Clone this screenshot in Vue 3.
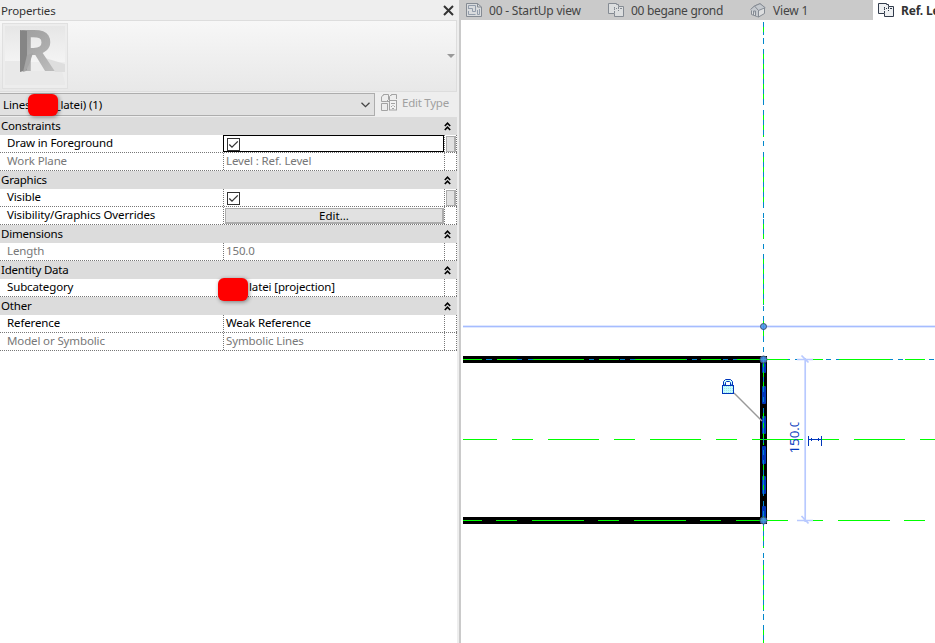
<template>
  <div class="window">
    <aside class="panel">
      <header class="title">
        <span class="fit">Properties</span>
        <svg class="close" width="11" height="11" viewBox="0 0 11 11">
          <path d="M1 1L10 10M10 1L1 10" fill="none" stroke="#333" stroke-width="2" />
        </svg>
      </header>

      <div class="preview">
        <svg width="66" height="66" viewBox="0 0 66 66">
          <defs>
            <linearGradient id="face" x1="0" y1="0" x2="0.4" y2="1">
              <stop offset="0" stop-color="#979797" />
              <stop offset="0.5" stop-color="#a6a6a6" />
              <stop offset="1" stop-color="#bcbcbc" />
            </linearGradient>
            <linearGradient id="wall" x1="0" y1="0" x2="0" y2="1">
              <stop offset="0" stop-color="#e6e6e6" />
              <stop offset="1" stop-color="#f4f4f4" />
            </linearGradient>
          </defs>
          <rect x="0.5" y="0.5" width="65" height="65" fill="#ededed" stroke="#e0e0e0" />
          <rect x="3" y="3" width="60" height="36" fill="url(#wall)" />
          <path d="M3 38H20V48L60 48L63 60V62H3Z" fill="#e9e9e9" />
          <path d="M43 35L63 41V49H53Z" fill="#dedede" />
          <text class="logo" x="15" y="48" fill="url(#face)">R</text>
          <path d="M18 7L25 8V47L18 49Z" fill="#858585" />
          <path d="M25 32L31 30L28 39L24 48L21 49Z" fill="#a5a5a5" />
        </svg>
        <i class="drop"></i>
      </div>

      <div class="selector">
        <div class="combo">
          <span class="fit">Lines</span>
          <b class="redact"></b>
          <span class="fit tail">_latei) (1)</span>
          <svg width="9" height="6" viewBox="0 0 9 6">
            <path d="M0.5 0.7L4.5 4.7L8.5 0.7" fill="none" stroke="#444" stroke-width="1.3" />
          </svg>
        </div>
        <div class="edit-type">
          <svg width="17" height="17" viewBox="0 0 17 17" fill="none" stroke="#a3a3a3">
            <path d="M0.5 7.5V3L2.5 0.5H7.5V5.5L5.5 7.5ZM8.5 6V2.5L10.5 0.5H15.5V5M0.5 9.5H6.5V16.5H0.5ZM5.5 7.5H8M2.5 0.5V1.5M10.5 0.5V1.5" />
            <rect x="8.5" y="6.5" width="7" height="9.5" fill="#f2f2f2" />
            <path d="M10 9.5H14M10 12.5H11M13 12.5H14M11 14.5H13M12 11V12" />
          </svg>
          <span class="fit">Edit Type</span>
        </div>
      </div>

      <section v-for="group in groups" :key="group.name">
        <div class="group">
          <span class="fit">{{ group.name }}</span>
          <svg width="7" height="9" viewBox="0 0 7 9">
            <path d="M0.8 4L3.5 1.2L6.2 4M0.8 8L3.5 5.2L6.2 8" fill="none" stroke="#000" stroke-width="1.6" />
          </svg>
        </div>
        <div v-for="row in group.rows" :key="row.label" class="row" :class="{ muted: row.muted }">
          <div class="label"><span class="fit">{{ row.label }}</span></div>
          <div class="value" :class="{ focused: row.focused }">
            <svg v-if="row.type === 'check'" class="check" width="13" height="13" viewBox="0 0 13 13">
              <rect x="0.5" y="0.5" width="12" height="12" fill="#fff" stroke="#333" />
              <path d="M2.3 6.5L5 9.2L10.8 3.4" fill="none" stroke="#333" stroke-width="1.3" />
            </svg>
            <button v-else-if="row.type === 'button'" class="edit">{{ row.value }}</button>
            <template v-else>
              <b v-if="row.redacted" class="redact sub"></b>
              <span class="fit" :class="{ shifted: row.redacted }">{{ row.value }}</span>
            </template>
          </div>
          <div class="assoc"><i v-if="row.type === 'check'"></i></div>
        </div>
      </section>
    </aside>

    <main class="workspace">
      <nav class="tabs">
        <div class="tab startup">
          <svg width="16" height="14" viewBox="0 0 16 14" fill="none">
            <path d="M0.5 0.5H11.5L15.5 4V13.5H0.5Z" fill="#d9dbdd" stroke="#858b93" />
            <path d="M11.5 0.5V4H15.5" stroke="#858b93" />
            <path d="M2.5 6V2.5H9.5V8.5H6.5V5.5H2.5M2.5 8V11.5H9.5M11.5 7V11.5H13.5V6" stroke="#939dab" />
          </svg>
          <span>00 - StartUp view</span>
        </div>
        <div class="tab floor">
          <svg width="16" height="14" viewBox="0 0 16 14" fill="none" stroke="#858b93">
            <path d="M0.5 0.5H8.5V1.5H10.5V3.5H15.5V13.5H6.5V10.5H0.5Z" fill="#dcdedf" />
            <path d="M6.5 10V5.5H9M10.5 4V8M12 5.5H14M6.5 5V4" stroke-dasharray="2 1" />
          </svg>
          <span>00 begane grond</span>
        </div>
        <div class="tab view">
          <svg width="16" height="15" viewBox="0 0 16 15">
            <path d="M1.5 6L4.5 3L10 0.7L14.5 4.5V10.5L8.5 14L1.5 11.5Z" fill="#dddedf" stroke="#858b93" />
            <path d="M0.5 6.5L4.5 3L8.5 7.5V14M4.5 3L10 0.7L15.2 4.7L8.5 7.5" fill="#c5c9ce" stroke="#858b93" />
            <path d="M3.5 12V8H5.5V13" fill="none" stroke="#858b93" />
          </svg>
          <span>View 1</span>
        </div>
        <div class="tab active">
          <svg width="16" height="14" viewBox="0 0 16 14" fill="none" stroke="#323c4c">
            <path d="M0.5 0.5H8.5V1.5H10.5V3.5H15.5V13.5H6.5V10.5H0.5Z" fill="#eff1f3" />
            <path d="M6.5 10V5.5H9M10.5 4V8M12 5.5H14M6.5 5V4" stroke-dasharray="2 1" />
          </svg>
          <span>Ref. Level</span>
        </div>
      </nav>

      <svg class="drawing" width="474" height="623" viewBox="461 20 474 623">
        <defs>
          <pattern id="hatch" width="2" height="2" patternUnits="userSpaceOnUse">
            <rect width="2" height="2" fill="#c6ffff" />
            <rect width="1" height="1" fill="#a6e4e8" />
          </pattern>
          <clipPath id="dimClip"><rect x="785" y="422.6" width="18" height="34" /></clipPath>
        </defs>

        <rect x="463" y="325" width="472" height="3" fill="#dfe8ff" />
        <rect x="463" y="326" width="472" height="1" fill="#a6bcff" />

        <!-- walls -->
        <g fill="#000">
          <rect x="463" y="356" width="304" height="7" />
          <rect x="463" y="517" width="304" height="7" />
          <rect x="760" y="356" width="7" height="168" />
        </g>
        <rect v-for="d in selected" :key="d[0]" x="762" :y="d[0]" width="4" :height="d[1] - d[0]" rx="1" fill="#0036bb" />

        <!-- reference planes -->
        <g shape-rendering="crispEdges">
          <rect v-for="(d, i) in topBlue" :key="'tb' + i" :x="d[0]" y="359" :width="d[1] - d[0]" height="1" fill="#0088cc" />
          <rect v-for="(d, i) in topGreen" :key="'tg' + i" :x="d[0]" y="359" :width="d[1] - d[0]" height="1" fill="#00ff00" />
          <rect v-for="(d, i) in middle" :key="'m' + i" :x="d[0]" y="439" :width="d[1] - d[0]" height="1" fill="#00ff00" />
          <rect v-for="(d, i) in bottom" :key="'b' + i" :x="d[0]" y="520" :width="d[1] - d[0]" height="1" fill="#00ff00" />
          <rect v-for="(d, i) in vertical" :key="'v' + i" x="763" :y="d[0]" width="1" :height="d[1] - d[0]" fill="#0088cc" />
          <rect v-for="(d, i) in verticalGreen" :key="'vg' + i" x="763" :y="d[0]" width="1" :height="d[1] - d[0]" fill="#00ff00" />
        </g>

        <!-- dimension -->
        <g stroke="#b8c9ff" fill="none" stroke-width="1.7">
          <path d="M805.2 358V522" />
          <path d="M797 359.5H813M801.5 355.5L808.5 362.5M797 520.5H813M801.5 516L808.5 523.5" />
        </g>
        <g clip-path="url(#dimClip)">
          <text class="dim" transform="translate(798.5 453.5) rotate(-90)" textLength="34" lengthAdjust="spacingAndGlyphs">150.0</text>
        </g>
        <path d="M808.5 436V446M821.5 436V446M809 439.5H821M811.5 438V441M818.5 438V441" fill="none" stroke="#0036bb" />

        <!-- lock -->
        <path d="M734 393L762 421" stroke="#999" stroke-width="1.5" />
        <path d="M723.5 385V381.5L725.5 379.5H730.5L732.5 381.5V385H730.5V382.5L729.5 381.5H726.5L725.5 382.5V385Z" fill="#c6ffff" stroke="#0036bb" />
        <rect x="722.5" y="385.5" width="11" height="8" fill="url(#hatch)" stroke="#0036bb" />

        <g fill="#4a93ed" fill-opacity="0.85" stroke="#3b5270">
          <circle cx="763.5" cy="326.5" r="3" />
          <circle cx="763.5" cy="359.5" r="3.5" />
          <circle cx="763.5" cy="520.5" r="3.5" />
        </g>
      </svg>
    </main>
  </div>
</template>

<script setup>
const groups = [
  {
    name: 'Constraints',
    rows: [
      { label: 'Draw in Foreground', type: 'check', focused: true },
      { label: 'Work Plane', value: 'Level : Ref. Level', muted: true },
    ],
  },
  {
    name: 'Graphics',
    rows: [
      { label: 'Visible', type: 'check' },
      { label: 'Visibility/Graphics Overrides', type: 'button', value: 'Edit...' },
    ],
  },
  { name: 'Dimensions', rows: [{ label: 'Length', value: '150.0', muted: true }] },
  { name: 'Identity Data', rows: [{ label: 'Subcategory', value: 'latei [projection]', redacted: true }] },
  {
    name: 'Other',
    rows: [
      { label: 'Reference', value: 'Weak Reference' },
      { label: 'Model or Symbolic', value: 'Symbolic Lines', muted: true },
    ],
  },
];

// dash segments, [start, end]
const selected = [[363, 373], [386, 404], [416, 434], [446, 464], [476, 494], [506, 520]];
const topGreen = [[463, 482], [497, 517], [533, 584], [599, 619], [635, 686], [701, 721], [737, 788], [800, 823], [839, 890], [905, 925]];
const topBlue = [[486, 492], [517, 522], [528, 533], [589, 594], [620, 625], [630, 635], [686, 687], [692, 697], [723, 728], [733, 737], [788, 790], [795, 800], [826, 831], [836, 839], [890, 893], [898, 903], [929, 934]];
const middle = [[463, 497], [512, 533], [548, 599], [614, 635], [650, 701], [716, 737], [752, 803], [822, 839], [854, 905], [920, 935]];
const bottom = [[463, 482], [496, 517], [532, 584], [598, 619], [634, 686], [700, 721], [736, 788], [800, 823], [838, 890], [904, 925]];
const vertical = [
  [22, 35], [38, 44], [49, 105], [110, 137], [141, 146], [152, 208], [213, 218], [219, 239], [244, 249],
  [254, 305], [306, 311], [316, 342], [347, 352], [357, 392], [397, 402], [408, 445], [450, 455],
  [460, 496], [501, 506], [511, 548], [553, 558], [560, 611], [614, 620], [625, 643],
];

// the second colour shows through every other 5px of the long dashes
const verticalGreen = [];
vertical.forEach(([from, to]) => {
  if (to - from < 10) return;
  for (let y = from + 5; y < to - 1; y += 10) verticalGreen.push([y, Math.min(y + 5, to)]);
});
</script>

<style>
body {
  margin: 0;
  background: #fff;
}
</style>

<style scoped>
.window {
  display: flex;
  width: 935px;
  height: 643px;
  overflow: hidden;
  font-family: 'Noto Sans', 'Open Sans', sans-serif;
  font-size: 12px;
  color: #000;
  background: #fff;
}

.fit {
  white-space: pre;
  font-size: 11.5px;
  letter-spacing: -0.13px;
}

.panel {
  box-sizing: border-box;
  flex: none;
  width: 461px;
  border-right: 2px solid #cacaca;
  box-shadow: inset -2px 0 #eee;
}

.title {
  display: flex;
  align-items: center;
  justify-content: space-between;
  box-sizing: border-box;
  height: 20px;
  padding: 1px 5px 0 1px;
  background: #eee;
  color: #333;
}

.preview {
  display: flex;
  align-items: center;
  justify-content: space-between;
  box-sizing: border-box;
  width: 457px;
  height: 72px;
  padding: 0 1px 0 2px;
  border: 1px solid #ddd;
  border-left: 0;
  background: linear-gradient(#f7f7f7, #e8e8e8);
}

.logo {
  font: bold 57px/1 'Open Sans', sans-serif;
}

.drop {
  border: 4px solid transparent;
  border-top-color: #999;
  border-bottom: 0;
}

.selector {
  display: flex;
  box-sizing: border-box;
  width: 459px;
  height: 25px;
  padding-top: 1px;
  background: #eee;
}

.combo {
  position: relative;
  display: flex;
  align-items: center;
  box-sizing: border-box;
  width: 375px;
  height: 23px;
  padding: 0 4px 0 3px;
  border: 1px solid #adadad;
  border-left: 0;
  background: #e1e1e1;
}

.tail {
  margin: 0 auto 0 25px;
}

.redact {
  position: absolute;
  left: 28px;
  top: 0;
  width: 30px;
  height: 22px;
  border-radius: 6px;
  background: #f00;
  box-shadow: 1px 1px 4px rgba(0, 0, 0, 0.45);
}

.redact.sub {
  left: -5px;
  top: -1px;
  height: 23px;
}

.edit-type {
  display: flex;
  align-items: center;
  gap: 4px;
  padding: 0 0 5px 6px;
  color: #a0a0a0;
}

.edit-type .fit {
  letter-spacing: -0.25px;
}

.group {
  display: flex;
  align-items: center;
  justify-content: space-between;
  box-sizing: border-box;
  width: 457px;
  height: 18px;
  padding: 0 6px 0 1px;
  background: #dcdcdc;
}

.group .fit {
  margin-bottom: 2px;
  letter-spacing: -0.2px;
}

.row {
  display: flex;
  box-sizing: border-box;
  width: 457px;
  height: 18px;
  padding-bottom: 1px;
  background: repeating-linear-gradient(90deg, #777 0 1px, #fff 1px 2px) bottom / 100% 1px no-repeat;
}

.label,
.value,
.assoc {
  position: relative;
  display: flex;
  align-items: center;
  box-sizing: border-box;
  height: 17px;
}

.label {
  width: 223px;
  padding-left: 7px;
  padding-bottom: 3px;
}

.value {
  width: 221px;
  padding-left: 3px;
  padding-bottom: 1px;
  background: repeating-linear-gradient(#777 0 1px, #fff 1px 2px) left / 1px 100% no-repeat;
}

.value .fit {
  margin-bottom: 2px;
}

.value.focused {
  box-shadow: inset 0 0 0 1px #000;
}

.check {
  margin: 2px 0 0 1px;
}

.value .shifted {
  position: relative;
  margin-left: 23px;
}

.edit {
  width: 219px;
  height: 16px;
  margin: 1px 0 0 -1px;
  padding: 0;
  border: 1px solid #adadad;
  border-right-width: 2px;
  border-bottom-width: 2px;
  background: #e1e1e1;
  font: 11.5px/13px 'Noto Sans', 'Open Sans', sans-serif;
  color: #000;
}

.assoc {
  width: 13px;
  background:
    repeating-linear-gradient(#777 0 1px, #fff 1px 2px) left / 1px 100% no-repeat,
    repeating-linear-gradient(#777 0 1px, #fff 1px 2px) right / 1px 100% no-repeat;
}

.assoc i {
  box-sizing: border-box;
  width: 10px;
  height: 16px;
  margin-left: 2px;
  border: 1px solid #adadad;
  border-right-width: 2px;
  background: #e1e1e1;
}

.muted {
  color: #777;
}

.workspace {
  flex: none;
  width: 474px;
}

.tabs {
  display: flex;
  height: 20px;
  overflow: hidden;
  background: #cacaca;
  color: #444;
}

.tab {
  display: flex;
  flex: none;
  align-items: center;
  gap: 7px;
  box-sizing: border-box;
  padding-left: 5px;
  white-space: nowrap;
  font-size: 12px;
  letter-spacing: -0.2px;
}

.startup {
  width: 142px;
}

.floor {
  width: 142px;
  letter-spacing: -0.3px;
}

.view {
  width: 128px;
}

.active {
  width: 110px;
  background: #fff;
  color: #333;
  font-weight: bold;
}

.drawing {
  display: block;
}

.dim {
  font: 13px 'Open Sans', sans-serif;
  fill: #0036bb;
}
</style>
